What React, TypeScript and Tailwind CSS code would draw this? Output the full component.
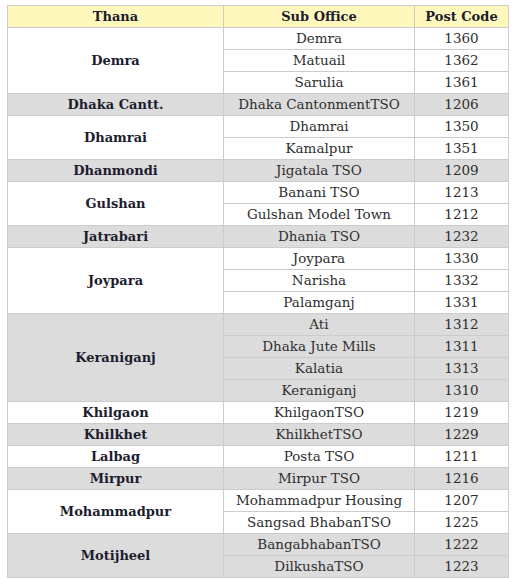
type Group = { thana: string; rows: [string, string][] };

const groups: Group[] = [
  { thana: "Demra", rows: [["Demra", "1360"], ["Matuail", "1362"], ["Sarulia", "1361"]] },
  { thana: "Dhaka Cantt.", rows: [["Dhaka CantonmentTSO", "1206"]] },
  { thana: "Dhamrai", rows: [["Dhamrai", "1350"], ["Kamalpur", "1351"]] },
  { thana: "Dhanmondi", rows: [["Jigatala TSO", "1209"]] },
  { thana: "Gulshan", rows: [["Banani TSO", "1213"], ["Gulshan Model Town", "1212"]] },
  { thana: "Jatrabari", rows: [["Dhania TSO", "1232"]] },
  { thana: "Joypara", rows: [["Joypara", "1330"], ["Narisha", "1332"], ["Palamganj", "1331"]] },
  {
    thana: "Keraniganj",
    rows: [["Ati", "1312"], ["Dhaka Jute Mills", "1311"], ["Kalatia", "1313"], ["Keraniganj", "1310"]],
  },
  { thana: "Khilgaon", rows: [["KhilgaonTSO", "1219"]] },
  { thana: "Khilkhet", rows: [["KhilkhetTSO", "1229"]] },
  { thana: "Lalbag", rows: [["Posta TSO", "1211"]] },
  { thana: "Mirpur", rows: [["Mirpur TSO", "1216"]] },
  { thana: "Mohammadpur", rows: [["Mohammadpur Housing", "1207"], ["Sangsad BhabanTSO", "1225"]] },
  { thana: "Motijheel", rows: [["BangabhabanTSO", "1222"], ["DilkushaTSO", "1223"]] },
];

export default function App() {
  return (
    <div className="h-[579px] overflow-hidden bg-white pl-[7px] pt-[5px] font-['DejaVu_Serif',serif]">
      <table className="w-[501px] table-fixed border-collapse border border-[#cccccc] text-center">
        <colgroup>
          <col className="w-[216px]" />
          <col className="w-[191px]" />
          <col className="w-[94px]" />
        </colgroup>
        <thead>
          <tr className="h-[22px] bg-[#fff8bd] text-[13px] font-bold text-[#1c1c2e]">
            <th className="border border-[#cccccc] p-0">Thana</th>
            <th className="border border-[#cccccc] p-0">Sub Office</th>
            <th className="border border-[#cccccc] p-0">Post Code</th>
          </tr>
        </thead>
        <tbody>
          {groups.map((g, gi) => {
            const bg = gi % 2 === 1 ? "bg-[#dcdcdc]" : "bg-white";
            return g.rows.map(([office, code], ri) => (
              <tr key={g.thana + office} className={`h-[22px] ${bg}`}>
                {ri === 0 && (
                  <td
                    rowSpan={g.rows.length}
                    className="border border-[#cccccc] p-0 text-[13px] font-bold text-[#1c1c2e]"
                  >
                    {g.thana}
                  </td>
                )}
                <td className="border border-[#cccccc] p-0 text-[13.5px] text-[#2e2e2e]">{office}</td>
                <td className="border border-[#cccccc] p-0 text-[13.5px] text-[#2e2e2e]">{code}</td>
              </tr>
            ));
          })}
        </tbody>
      </table>
    </div>
  );
}
